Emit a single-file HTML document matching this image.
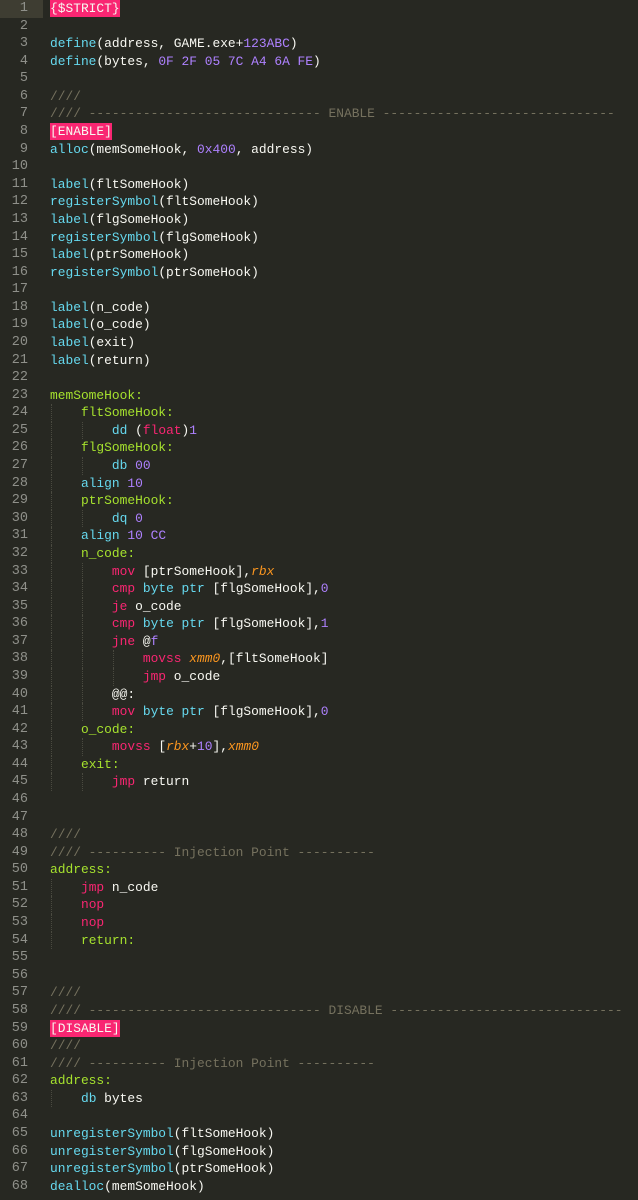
<!DOCTYPE html>
<html><head><meta charset="utf-8"><style>
html,body{margin:0;padding:0;background:#272822;width:638px;height:1200px;overflow:hidden}
body{font-family:"Liberation Mono","DejaVu Sans Mono",monospace;font-size:12.9px;color:#f8f8f2}
.l{position:relative;height:17.58px;line-height:17.58px;white-space:pre}
.n{position:absolute;left:0;width:28px;text-align:right;color:#8f908a;font-size:13.5px}
.c{position:absolute;left:50px}
.k{color:#f92672}.b{color:#66d9ef}.p{color:#ae81ff}.g{color:#a6e22e}.o{color:#fd971f;font-style:italic}.m{color:#75715e}
.x{background:#f92672;color:#f8f8f0;padding:1px 0}
.gd{position:absolute;top:0;bottom:0;border-left:1px dotted #4a4a40}
</style></head><body>
<div class="l"><span class="n" style="width:43px;padding-right:15px;box-sizing:border-box;background:#3e3d32">1</span><span class="c"><span class="x">{$STRICT}</span></span></div>
<div class="l"><span class="n">2</span></div>
<div class="l"><span class="n">3</span><span class="c"><span class="b">define</span>(address, GAME.exe+<span class="p">123ABC</span>)</span></div>
<div class="l"><span class="n">4</span><span class="c"><span class="b">define</span>(bytes, <span class="p">0F 2F 05 7C A4 6A FE</span>)</span></div>
<div class="l"><span class="n">5</span></div>
<div class="l"><span class="n">6</span><span class="c m">////</span></div>
<div class="l"><span class="n">7</span><span class="c m">//// ------------------------------ ENABLE ------------------------------</span></div>
<div class="l"><span class="n">8</span><span class="c"><span class="x">[ENABLE]</span></span></div>
<div class="l"><span class="n">9</span><span class="c"><span class="b">alloc</span>(memSomeHook, <span class="p">0x400</span>, address)</span></div>
<div class="l"><span class="n">10</span></div>
<div class="l"><span class="n">11</span><span class="c"><span class="b">label</span>(fltSomeHook)</span></div>
<div class="l"><span class="n">12</span><span class="c"><span class="b">registerSymbol</span>(fltSomeHook)</span></div>
<div class="l"><span class="n">13</span><span class="c"><span class="b">label</span>(flgSomeHook)</span></div>
<div class="l"><span class="n">14</span><span class="c"><span class="b">registerSymbol</span>(flgSomeHook)</span></div>
<div class="l"><span class="n">15</span><span class="c"><span class="b">label</span>(ptrSomeHook)</span></div>
<div class="l"><span class="n">16</span><span class="c"><span class="b">registerSymbol</span>(ptrSomeHook)</span></div>
<div class="l"><span class="n">17</span></div>
<div class="l"><span class="n">18</span><span class="c"><span class="b">label</span>(n_code)</span></div>
<div class="l"><span class="n">19</span><span class="c"><span class="b">label</span>(o_code)</span></div>
<div class="l"><span class="n">20</span><span class="c"><span class="b">label</span>(exit)</span></div>
<div class="l"><span class="n">21</span><span class="c"><span class="b">label</span>(return)</span></div>
<div class="l"><span class="n">22</span></div>
<div class="l"><span class="n">23</span><span class="c g">memSomeHook:</span></div>
<div class="l"><span class="n">24</span><span class="gd" style="left:51px"></span><span class="c">    <span class="g">fltSomeHook:</span></span></div>
<div class="l"><span class="n">25</span><span class="gd" style="left:51px"></span><span class="gd" style="left:82px"></span><span class="c">        <span class="b">dd</span> (<span class="k">float</span>)<span class="p">1</span></span></div>
<div class="l"><span class="n">26</span><span class="gd" style="left:51px"></span><span class="c">    <span class="g">flgSomeHook:</span></span></div>
<div class="l"><span class="n">27</span><span class="gd" style="left:51px"></span><span class="gd" style="left:82px"></span><span class="c">        <span class="b">db</span> <span class="p">00</span></span></div>
<div class="l"><span class="n">28</span><span class="gd" style="left:51px"></span><span class="c">    <span class="b">align</span> <span class="p">10</span></span></div>
<div class="l"><span class="n">29</span><span class="gd" style="left:51px"></span><span class="c">    <span class="g">ptrSomeHook:</span></span></div>
<div class="l"><span class="n">30</span><span class="gd" style="left:51px"></span><span class="gd" style="left:82px"></span><span class="c">        <span class="b">dq</span> <span class="p">0</span></span></div>
<div class="l"><span class="n">31</span><span class="gd" style="left:51px"></span><span class="c">    <span class="b">align</span> <span class="p">10 CC</span></span></div>
<div class="l"><span class="n">32</span><span class="gd" style="left:51px"></span><span class="c">    <span class="g">n_code:</span></span></div>
<div class="l"><span class="n">33</span><span class="gd" style="left:51px"></span><span class="gd" style="left:82px"></span><span class="c">        <span class="k">mov</span> [ptrSomeHook],<span class="o">rbx</span></span></div>
<div class="l"><span class="n">34</span><span class="gd" style="left:51px"></span><span class="gd" style="left:82px"></span><span class="c">        <span class="k">cmp</span> <span class="b">byte ptr</span> [flgSomeHook],<span class="p">0</span></span></div>
<div class="l"><span class="n">35</span><span class="gd" style="left:51px"></span><span class="gd" style="left:82px"></span><span class="c">        <span class="k">je</span> o_code</span></div>
<div class="l"><span class="n">36</span><span class="gd" style="left:51px"></span><span class="gd" style="left:82px"></span><span class="c">        <span class="k">cmp</span> <span class="b">byte ptr</span> [flgSomeHook],<span class="p">1</span></span></div>
<div class="l"><span class="n">37</span><span class="gd" style="left:51px"></span><span class="gd" style="left:82px"></span><span class="c">        <span class="k">jne</span> @<span class="p">f</span></span></div>
<div class="l"><span class="n">38</span><span class="gd" style="left:51px"></span><span class="gd" style="left:82px"></span><span class="gd" style="left:113px"></span><span class="c">            <span class="k">movss</span> <span class="o">xmm0</span>,[fltSomeHook]</span></div>
<div class="l"><span class="n">39</span><span class="gd" style="left:51px"></span><span class="gd" style="left:82px"></span><span class="gd" style="left:113px"></span><span class="c">            <span class="k">jmp</span> o_code</span></div>
<div class="l"><span class="n">40</span><span class="gd" style="left:51px"></span><span class="gd" style="left:82px"></span><span class="c">        @@:</span></div>
<div class="l"><span class="n">41</span><span class="gd" style="left:51px"></span><span class="gd" style="left:82px"></span><span class="c">        <span class="k">mov</span> <span class="b">byte ptr</span> [flgSomeHook],<span class="p">0</span></span></div>
<div class="l"><span class="n">42</span><span class="gd" style="left:51px"></span><span class="c">    <span class="g">o_code:</span></span></div>
<div class="l"><span class="n">43</span><span class="gd" style="left:51px"></span><span class="gd" style="left:82px"></span><span class="c">        <span class="k">movss</span> [<span class="o">rbx</span>+<span class="p">10</span>],<span class="o">xmm0</span></span></div>
<div class="l"><span class="n">44</span><span class="gd" style="left:51px"></span><span class="c">    <span class="g">exit:</span></span></div>
<div class="l"><span class="n">45</span><span class="gd" style="left:51px"></span><span class="gd" style="left:82px"></span><span class="c">        <span class="k">jmp</span> return</span></div>
<div class="l"><span class="n">46</span></div>
<div class="l"><span class="n">47</span></div>
<div class="l"><span class="n">48</span><span class="c m">////</span></div>
<div class="l"><span class="n">49</span><span class="c m">//// ---------- Injection Point ----------</span></div>
<div class="l"><span class="n">50</span><span class="c g">address:</span></div>
<div class="l"><span class="n">51</span><span class="gd" style="left:51px"></span><span class="c">    <span class="k">jmp</span> n_code</span></div>
<div class="l"><span class="n">52</span><span class="gd" style="left:51px"></span><span class="c">    <span class="k">nop</span></span></div>
<div class="l"><span class="n">53</span><span class="gd" style="left:51px"></span><span class="c">    <span class="k">nop</span></span></div>
<div class="l"><span class="n">54</span><span class="gd" style="left:51px"></span><span class="c">    <span class="g">return:</span></span></div>
<div class="l"><span class="n">55</span></div>
<div class="l"><span class="n">56</span></div>
<div class="l"><span class="n">57</span><span class="c m">////</span></div>
<div class="l"><span class="n">58</span><span class="c m">//// ------------------------------ DISABLE ------------------------------</span></div>
<div class="l"><span class="n">59</span><span class="c"><span class="x">[DISABLE]</span></span></div>
<div class="l"><span class="n">60</span><span class="c m">////</span></div>
<div class="l"><span class="n">61</span><span class="c m">//// ---------- Injection Point ----------</span></div>
<div class="l"><span class="n">62</span><span class="c g">address:</span></div>
<div class="l"><span class="n">63</span><span class="gd" style="left:51px"></span><span class="c">    <span class="b">db</span> bytes</span></div>
<div class="l"><span class="n">64</span></div>
<div class="l"><span class="n">65</span><span class="c"><span class="b">unregisterSymbol</span>(fltSomeHook)</span></div>
<div class="l"><span class="n">66</span><span class="c"><span class="b">unregisterSymbol</span>(flgSomeHook)</span></div>
<div class="l"><span class="n">67</span><span class="c"><span class="b">unregisterSymbol</span>(ptrSomeHook)</span></div>
<div class="l"><span class="n">68</span><span class="c"><span class="b">dealloc</span>(memSomeHook)</span></div>
</body></html>
